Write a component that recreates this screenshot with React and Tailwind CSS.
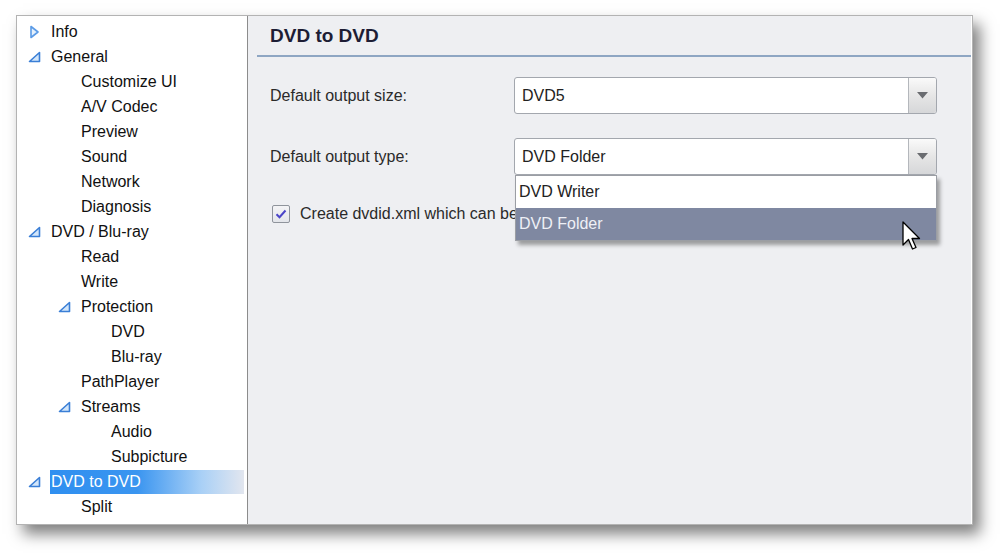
import React from 'react';

const font = { fontFamily: '"Liberation Sans", Arial, sans-serif' };

const tree = [
  { label: 'Info', level: 0, icon: 'closed' },
  { label: 'General', level: 0, icon: 'open' },
  { label: 'Customize UI', level: 1 },
  { label: 'A/V Codec', level: 1 },
  { label: 'Preview', level: 1 },
  { label: 'Sound', level: 1 },
  { label: 'Network', level: 1 },
  { label: 'Diagnosis', level: 1 },
  { label: 'DVD / Blu-ray', level: 0, icon: 'open' },
  { label: 'Read', level: 1 },
  { label: 'Write', level: 1 },
  { label: 'Protection', level: 1, icon: 'open' },
  { label: 'DVD', level: 2 },
  { label: 'Blu-ray', level: 2 },
  { label: 'PathPlayer', level: 1 },
  { label: 'Streams', level: 1, icon: 'open' },
  { label: 'Audio', level: 2 },
  { label: 'Subpicture', level: 2 },
  { label: 'DVD to DVD', level: 0, icon: 'open', selected: true },
  { label: 'Split', level: 1 },
];

const indent = ['pl-[11px]', 'pl-[41px]', 'pl-[71px]'];

// tree expander glyphs, win7 style
const Expander = ({ type }) => {
  if (type === 'open') {
    return (
      <svg width="13" height="12" viewBox="0 0 13 12">
        <polygon points="11.5,1.5 11.5,10.5 1.5,10.5" fill="#d3e6fa" stroke="#3b7fd6" strokeWidth="1.6" strokeLinejoin="round" />
      </svg>
    );
  }
  if (type === 'closed') {
    return (
      <svg width="13" height="14" viewBox="0 0 13 14">
        <polygon points="3,1.5 10,7 3,12.5" fill="#e4f0fc" stroke="#5b9be6" strokeWidth="1.6" strokeLinejoin="round" />
      </svg>
    );
  }
  return null;
};

const TreeRow = ({ label, level, icon, selected }) => (
  <div className={`flex items-center h-[25px] ${indent[level]}`}>
    <span className="w-[13px] mr-[9px] flex items-center justify-center">
      <Expander type={icon} />
    </span>
    {selected ? (
      <span className="flex-1 mr-[3px] h-[24px] flex items-center pl-[1px] text-white bg-[linear-gradient(90deg,#2f8ff0_0%,#3a95f0_45%,#a9d0f6_78%,#e2e6ef_100%)]">
        {label}
      </span>
    ) : (
      <span className="pl-[1px] text-[#111]">{label}</span>
    )}
  </div>
);

const Combo = ({ value, children }) => (
  <div className="relative w-[423px] h-[37px]">
    <div className="flex h-full border border-[#a3a7ae] rounded-[3px] bg-white">
      <div className="flex-1 flex items-center pl-[7px] text-[#222]">{value}</div>
      <div className="w-[28px] border-l border-[#b4b7bc] rounded-r-[2px] bg-[linear-gradient(180deg,#fafafa,#e6e6e6_50%,#d6d7d9)] flex items-center justify-center">
        <svg width="11" height="7" viewBox="0 0 11 7">
          <polygon points="0,0 11,0 5.5,6.5" fill="#6a6c70" />
        </svg>
      </div>
    </div>
    {children}
  </div>
);

const App = () => {
  return (
    <div className="relative w-[1000px] h-[553px] bg-white pt-[15px] pl-[16px] text-[16px] overflow-hidden" style={font}>
      <div className="flex w-[957px] h-[510px] border border-[#b3b3b3] shadow-[7px_9px_14px_rgba(0,0,0,0.5)]">
        {/* left tree */}
        <div className="w-[231px] bg-white border-r border-[#8c8c8c] pt-[3px]">
          {tree.map((item) => (
            <TreeRow key={item.label + item.level} {...item} />
          ))}
        </div>

        {/* settings page */}
        <div className="flex-1 bg-[#eeeff2] border-r border-white">
          <div className="pl-[22px] pt-[9px] h-[22px] leading-[22px] box-content text-[19px] font-bold text-[#1d1d35]">
            DVD to DVD
          </div>
          <div className="ml-[9px] mt-[8px] h-[2px] bg-[#8ea6c3]" />

          <div className="pl-[22px]">
            <div className="flex items-center mt-[20px]">
              <span className="w-[244px] text-[#2a2a2a]">Default output size:</span>
              <Combo value="DVD5" />
            </div>

            <div className="flex items-center mt-[24px]">
              <span className="w-[244px] text-[#2a2a2a]">Default output type:</span>
              <Combo value="DVD Folder">
                <div className="absolute left-[1px] top-full w-[422px] bg-white border border-[#9b9ea4] shadow-[3px_4px_4px_rgba(0,0,0,0.35)] z-10">
                  <div className="h-[32px] flex items-center pl-[3px] text-[#222]">DVD Writer</div>
                  <div className="h-[32px] flex items-center pl-[3px] bg-[#7f88a1] text-[#eef0f6]">DVD Folder</div>
                </div>
              </Combo>
            </div>

            <div className="flex items-center h-[22px] mt-[28px] pl-[2px]">
              <span className="w-[18px] h-[18px] border border-[#8f949c] rounded-[2px] bg-[linear-gradient(180deg,#f4f4f6,#e3e5ea)] flex items-center justify-center">
                <svg width="12" height="10" viewBox="0 0 12 10">
                  <path d="M1.5 5.2 L4.5 8.2 L10.5 1.5" fill="none" stroke="#4a44c8" strokeWidth="2" />
                </svg>
              </span>
              {/* the open list lies over the end of this label */}
              <span className="ml-[10px] whitespace-nowrap text-[#2a2a2a]">Create dvdid.xml which can be</span>
            </div>
          </div>
        </div>
      </div>

      {/* mouse pointer over the open list */}
      <svg className="absolute left-[902px] top-[221px] z-20" width="22" height="32" viewBox="0 0 22 32">
        <path d="M1 1 L1 24 L6.5 18.5 L10.5 28 L14 26.5 L10 17.5 L17.5 17.5 Z" fill="#fff" stroke="#000" strokeWidth="1.3" strokeLinejoin="round" />
      </svg>
    </div>
  );
};

export default App;
